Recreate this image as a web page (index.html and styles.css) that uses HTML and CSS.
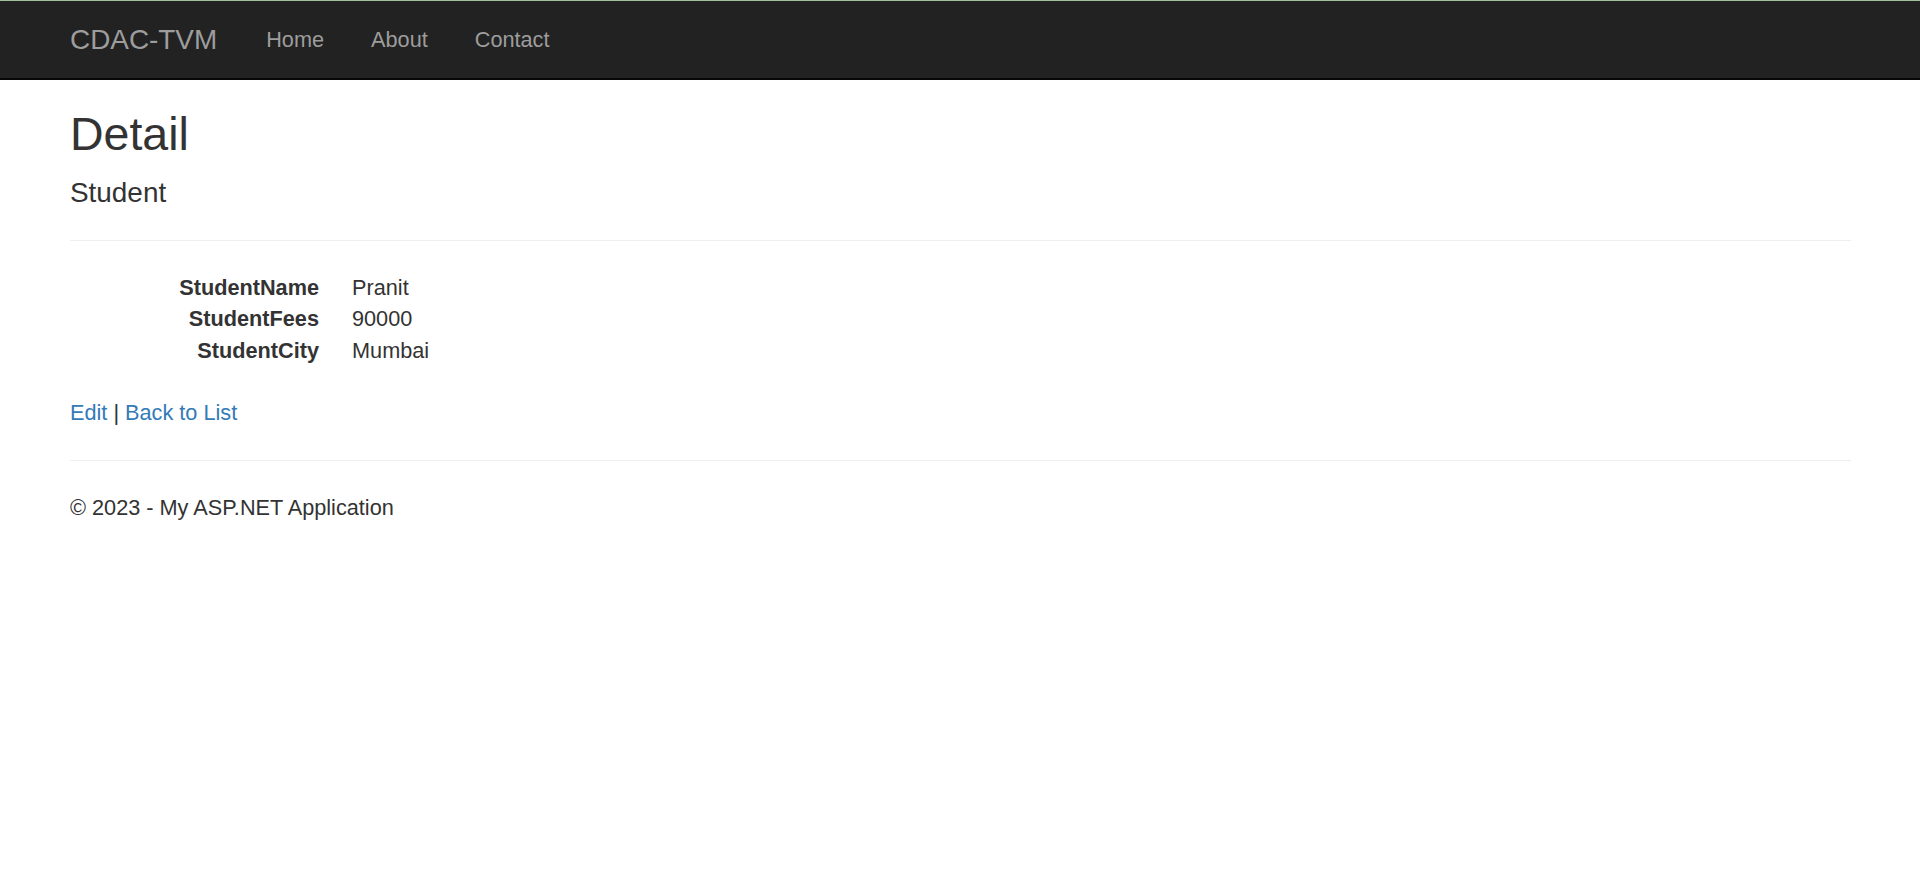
FILE: index.html
```
<!DOCTYPE html>
<html lang="en">
<head>
<meta charset="utf-8">
<title>Detail - My ASP.NET Application</title>
<link rel="stylesheet" href="styles.css">
</head>
<body>
<header class="navbar">
  <div class="container navbar-inner">
    <a class="brand" href="#">CDAC-TVM</a>
    <nav class="nav">
      <a href="#">Home</a>
      <a href="#">About</a>
      <a href="#">Contact</a>
    </nav>
  </div>
</header>
<main class="container body-content">
  <h2 class="page-title">Detail</h2>
  <div>
    <h4 class="subtitle">Student</h4>
    <hr class="rule rule-top">
    <dl class="details">
      <dt>StudentName</dt>
      <dd>Pranit</dd>
      <dt>StudentFees</dt>
      <dd>90000</dd>
      <dt>StudentCity</dt>
      <dd>Mumbai</dd>
    </dl>
  </div>
  <p class="actions"><a href="#">Edit</a> | <a href="#">Back to List</a></p>
  <hr class="rule rule-bottom">
  <footer class="footer">
    <p>&copy; 2023 - My ASP.NET Application</p>
  </footer>
</main>
</body>
</html>
```
FILE: styles.css
```
html, body {
  margin: 0;
  padding: 0;
  background: #fff;
}

body {
  font-family: "Liberation Sans", Arial, Helvetica, sans-serif;
  font-size: 21.7px;
  line-height: 31px;
  color: #333;
}

a {
  color: #337ab7;
  text-decoration: none;
}

.container {
  padding: 0 69px 0 70px;
}

.navbar {
  background: #222;
  border-top: 1px solid #a3bf9b;
  border-bottom: 2px solid #080808;
  height: 77px;
}

.navbar-inner {
  display: flex;
  align-items: flex-start;
}

.brand {
  color: #9d9d9d;
  font-size: 27.9px;
  line-height: 31px;
  padding: 23px 25.5px 0 0;
}

.nav {
  display: flex;
}

.nav a {
  color: #9d9d9d;
  font-size: 21.7px;
  line-height: 31px;
  padding: 23px 23.5px 0;
}

.page-title {
  font-size: 46.5px;
  line-height: 51px;
  font-weight: 500;
  margin: 29px 0 18px;
}

.subtitle {
  font-size: 27.9px;
  line-height: 30.7px;
  font-weight: 500;
  margin: 0;
}

.rule {
  border: 0;
  border-top: 1px solid #eee;
  height: 0;
  margin: 0;
}

.rule-top {
  margin-top: 31px;
  margin-bottom: 31px;
}

.details {
  display: grid;
  grid-template-columns: 249px 1fr;
  column-gap: 33px;
  line-height: 31.4px;
  margin: 0 0 31px;
}

.details dt {
  font-weight: bold;
  text-align: right;
  white-space: nowrap;
}

.details dd {
  margin: 0;
}

.actions {
  margin: 0;
}

.rule-bottom {
  margin-top: 32px;
  margin-bottom: 31px;
}

.footer p {
  margin: 0;
}
```
